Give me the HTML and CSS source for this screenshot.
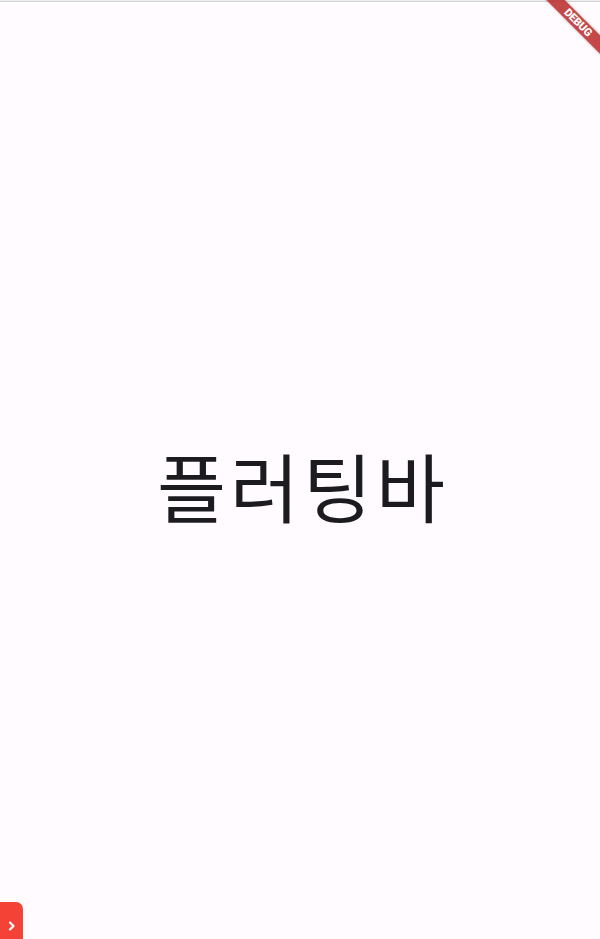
FILE: index.html
```html
<!DOCTYPE html>
<html lang="ko">
<head>
<meta charset="utf-8">
<title>플러팅바</title>
<link rel="stylesheet" href="styles.css">
</head>
<body>
<div class="app">
  <div class="topline"></div>
  <main class="content">
    <h1 class="title">플러팅바</h1>
  </main>
  <button class="tab" aria-label="open">
    <svg width="8" height="10" viewBox="0 0 8 10"><path d="M2 1.5 L5.5 5 L2 8.5" fill="none" stroke="#fff" stroke-width="2.2" stroke-linecap="round" stroke-linejoin="round"/></svg>
  </button>
  <div class="banner"><span>DEBUG</span></div>
</div>
</body>
</html>
```
FILE: styles.css
```css
html, body {
  margin: 0;
  padding: 0;
  height: 100%;
}
body {
  background: #fffbfe;
  font-family: "Noto Sans CJK KR", "Noto Sans", sans-serif;
  overflow: hidden;
}
.app {
  position: relative;
  width: 600px;
  height: 939px;
  display: flex;
  flex-direction: column;
}
.topline {
  height: 2px;
  flex: none;
  background: linear-gradient(#ececec 0 1px, #d6d6d6 1px 2px);
}
.content {
  flex: 1;
  display: flex;
  align-items: center;
  justify-content: center;
  padding-top: 28px;
  padding-left: 6px;
}
.title {
  margin: 0;
  font-size: 75px;
  font-weight: 400;
  color: #1c1b1f;
  line-height: 1;
  letter-spacing: 4px;
}
.tab {
  position: absolute;
  left: 0;
  bottom: 0;
  width: 23px;
  height: 37px;
  border: none;
  padding: 0 0 0 8px;
  background: #f44336;
  border-top-right-radius: 7px;
  display: flex;
  align-items: center;
  justify-content: flex-start;
  padding-top: 10px;
}
.banner {
  position: absolute;
  top: 16px;
  right: -38px;
  width: 120px;
  height: 13px;
  transform: rotate(45deg);
  background: rgba(183, 28, 28, 0.8);
  box-shadow: 0 0 3px rgba(0, 0, 0, 0.3);
  display: flex;
  align-items: center;
  justify-content: center;
}
.banner span {
  color: #fff;
  font-family: "Roboto", "Liberation Sans", sans-serif;
  font-size: 11px;
  font-weight: 900;
  line-height: 1;
  letter-spacing: -0.2px;
}
```
